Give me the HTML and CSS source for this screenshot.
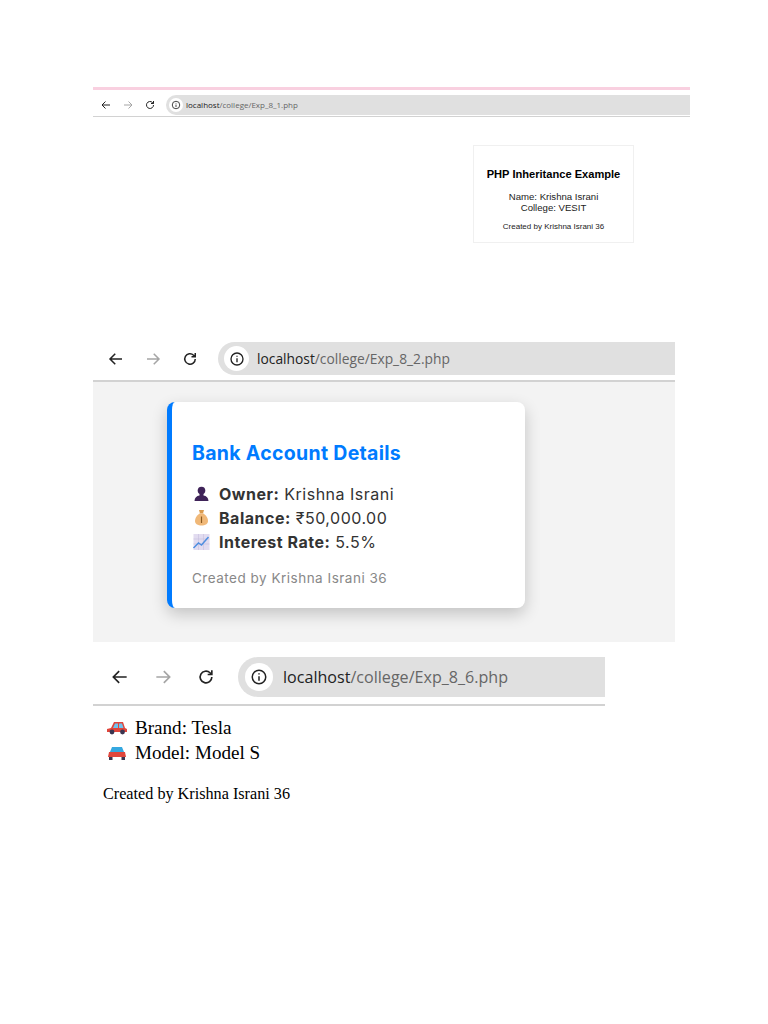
FILE: index.html
```html
<!DOCTYPE html>
<html lang="en">

<head>
    <meta charset="UTF-8" />
    <title>Exp 8</title>
    <link rel="stylesheet" href="styles.css">
</head>

<body>
    <!-- Exp 8.1 -->
    <section class="shot shot-one">
        <div class="pink-line"></div>
        <div class="toolbar">
            <svg class="nav-icon" viewBox="0 0 24 24"><path d="M20 12H5M11 5l-7 7 7 7" /></svg>
            <svg class="nav-icon off" viewBox="0 0 24 24"><path d="M4 12h15M13 5l7 7-7 7" /></svg>
            <svg class="nav-icon" viewBox="0 0 24 24"><path d="M19 12a7 7 0 1 1-2.2-5.1L19 9M19 4v5h-5" /></svg>
            <div class="address">
                <span class="info"><svg viewBox="0 0 24 24"><circle cx="12" cy="12" r="9" /><path d="M12 11v6M12 7v1.6" /></svg></span>
                <span class="url"><b>localhost</b>/college/Exp_8_1.php</span>
            </div>
        </div>
        <div class="php-page">
            <div class="php-card">
                <h2>PHP Inheritance Example</h2>
                <p>Name: Krishna Israni<br>College: VESIT</p>
                <small>Created by Krishna Israni 36</small>
            </div>
        </div>
    </section>

    <!-- Exp 8.2 -->
    <section class="shot shot-two">
        <div class="toolbar">
            <svg class="nav-icon" viewBox="0 0 24 24"><path d="M20 12H5M11 5l-7 7 7 7" /></svg>
            <svg class="nav-icon off" viewBox="0 0 24 24"><path d="M4 12h15M13 5l7 7-7 7" /></svg>
            <svg class="nav-icon" viewBox="0 0 24 24"><path d="M19 12a7 7 0 1 1-2.2-5.1L19 9M19 4v5h-5" /></svg>
            <div class="address">
                <span class="info"><svg viewBox="0 0 24 24"><circle cx="12" cy="12" r="9" /><path d="M12 11v6M12 7v1.6" /></svg></span>
                <span class="url"><b>localhost</b>/college/Exp_8_2.php</span>
            </div>
        </div>
        <div class="bank-page">
            <div class="bank-card">
                <h2>Bank Account Details</h2>
                <div class="bank-row">
                    <svg class="emoji" viewBox="0 0 16 16"><circle cx="8" cy="4.500" r="3.800" fill="#3f2358" /><path d="M6 7h4v2.500c3 .5 4.800 2 5 5.500H1c.2-3.500 2-5 5-5.500z" fill="#3f2358" /></svg>
                    <span><b>Owner:</b> Krishna Israni</span>
                </div>
                <div class="bank-row">
                    <svg class="emoji" viewBox="0 0 16 16"><path d="M5.500 0h5L9.500 3.500h-3z" fill="#d99a4e" /><path d="M6 3.500h4c3 2 4.500 4.800 4.500 7.500 0 3-3 4.500-6.500 4.500S1.500 14 1.500 11c0-2.700 1.500-5.500 4.500-7.500z" fill="#f0b878" /><path d="M8 6.500v6.500" stroke="#8a5a20" stroke-width="1.200" /></svg>
                    <span><b>Balance:</b> ₹50,000.00</span>
                </div>
                <div class="bank-row">
                    <svg class="emoji" viewBox="0 0 16 16"><rect width="16" height="16" fill="#e2dcf0" /><path d="M5 0v16M10 0v16M0 5h16M0 10h16" stroke="#c8c0de" stroke-width=".6" /><path d="M0 14l5-5 3 2 7-8" fill="none" stroke="#4f8fe0" stroke-width="1.500" /></svg>
                    <span><b>Interest Rate:</b> 5.5%</span>
                </div>
                <p class="bank-foot">Created by Krishna Israni 36</p>
            </div>
        </div>
    </section>

    <!-- Exp 8.6 -->
    <section class="shot shot-three">
        <div class="toolbar">
            <svg class="nav-icon" viewBox="0 0 24 24"><path d="M20 12H5M11 5l-7 7 7 7" /></svg>
            <svg class="nav-icon off" viewBox="0 0 24 24"><path d="M4 12h15M13 5l7 7-7 7" /></svg>
            <svg class="nav-icon" viewBox="0 0 24 24"><path d="M19 12a7 7 0 1 1-2.2-5.1L19 9M19 4v5h-5" /></svg>
            <div class="address">
                <span class="info"><svg viewBox="0 0 24 24"><circle cx="12" cy="12" r="9" /><path d="M12 11v6M12 7v1.6" /></svg></span>
                <span class="url"><b>localhost</b>/college/Exp_8_6.php</span>
            </div>
        </div>
        <div class="car-page">
            <div class="car-row">
                <svg class="car" viewBox="0 0 20 14"><path d="M0 11V8l4-1 3-6h9l2 6 2 1v3z" fill="#e0463c" /><path d="M8 2.500h3V7H6zM12 2.500h3L16.500 7H12z" fill="#6fc3ee" /><circle cx="5" cy="11" r="2.400" fill="#3a3550" /><circle cx="15.500" cy="11" r="2.400" fill="#3a3550" /></svg>
                <span>Brand: Tesla</span>
            </div>
            <div class="car-row">
                <svg class="car" viewBox="0 0 20 14"><path d="M5 1h10l2 5H3z" fill="#35a8e0" /><path d="M2 6h16l1 5H1z" fill="#e0463c" /><rect x="2" y="11" width="3.500" height="3" fill="#3a3550" /><rect x="14.500" y="11" width="3.500" height="3" fill="#3a3550" /></svg>
                <span>Model: Model S</span>
            </div>
            <p class="car-foot">Created by Krishna Israni 36</p>
        </div>
    </section>
</body>

</html>
```

FILE: styles.css
```css
body {
    margin: 0;
    background-color: #fff;
    font-family: "Liberation Sans", Arial, sans-serif;
}

.shot {
    margin-left: 93px;
}

.shot-one {
    width: 597px;
    padding-top: 87px;
}

.shot-two {
    width: 582px;
    margin-top: 94px;
}

.shot-three {
    width: 512px;
    margin-top: 8px;
}

.pink-line {
    height: 3px;
    background-color: #f9d0e0;
}

/* browser bars */

.toolbar {
    display: flex;
    align-items: center;
    background-color: #fff;
    border-bottom: 2px solid #d2d2d2;
}

.nav-icon {
    flex: none;
    fill: none;
    stroke: #222;
    stroke-width: 2;
}

.nav-icon.off {
    stroke: #a5a5a5;
}

.address {
    flex: 1;
    display: flex;
    align-items: center;
    background-color: #e0e0e0;
}

.info {
    display: flex;
    align-items: center;
    justify-content: center;
    background-color: #fff;
    border-radius: 50%;
}

.info svg {
    fill: none;
    stroke: #222;
    stroke-width: 2;
}

.url {
    color: #666;
    font-family: "Open Sans", sans-serif;
}

.url b {
    font-weight: 400;
    color: #222;
}

.shot-one .toolbar {
    height: 23px;
    padding-left: 7px;
    margin-top: 3px;
    border-bottom-width: 1px;
    gap: 10px;
}

.shot-one .nav-icon {
    width: 12px;
    height: 12px;
}

.shot-one .address {
    height: 20px;
    padding-left: 3px;
    border-radius: 10px 0 0 10px;
}

.shot-one .info {
    width: 14px;
    height: 14px;
}

.shot-one .info svg {
    width: 10px;
    height: 10px;
}

.shot-one .url {
    font-size: 8px;
    margin-left: 3px;
}

.shot-two .toolbar {
    height: 43px;
    padding-left: 14px;
    gap: 19px;
}

.shot-two .nav-icon {
    width: 18px;
    height: 18px;
}

.shot-two .address {
    height: 33px;
    padding-left: 6px;
    border-radius: 17px 0 0 17px;
}

.shot-two .info {
    width: 25px;
    height: 25px;
}

.shot-two .info svg {
    width: 16px;
    height: 16px;
}

.shot-two .url {
    font-size: 13.800px;
    margin-left: 8px;
}

.shot-three .toolbar {
    height: 54px;
    padding-left: 17px;
    gap: 23px;
}

.shot-three .nav-icon {
    width: 20px;
    height: 20px;
}

.shot-three .address {
    height: 40px;
    padding-left: 7px;
    margin-left: -1px;
    border-radius: 20px 0 0 20px;
}

.shot-three .info {
    width: 28px;
    height: 28px;
}

.shot-three .info svg {
    width: 18px;
    height: 18px;
}

.shot-three .url {
    font-size: 16.100px;
    margin-left: 10px;
}

/* first page */

.php-page {
    display: flex;
    justify-content: flex-end;
    padding: 28px 56px 0 0;
}

.php-card {
    width: 159px;
    height: 96px;
    border: 1px solid #f0f0f0;
    text-align: center;
    color: #222;
}

.php-card h2 {
    margin: 22px 0 11px;
    font-size: 11.100px;
    color: #000;
}

.php-card p {
    margin: 0 0 9px;
    font-size: 9.600px;
    line-height: 11px;
}

.php-card small {
    display: block;
    font-size: 8px;
    line-height: 10px;
}

/* bank page */

.bank-page {
    height: 260px;
    padding: 20px 0 0 74px;
    background-color: #f3f3f3;
    box-sizing: border-box;
}

.bank-card {
    width: 358px;
    height: 206px;
    padding: 40px 0 0 20px;
    box-sizing: border-box;
    background-color: #fff;
    border-left: 5px solid #007bff;
    border-radius: 8px;
    box-shadow: 0 6px 16px rgba(0, 0, 0, 0.2);
    font-family: Inter, sans-serif;
    color: #333;
}

.bank-card h2 {
    margin: 0 0 18px;
    font-size: 19.500px;
    line-height: 22px;
    font-weight: 700;
    letter-spacing: 0.3px;
    color: #007bff;
}

.bank-row {
    display: flex;
    align-items: center;
    gap: 8px;
    height: 24px;
    font-size: 16px;
    letter-spacing: 0.5px;
}

.bank-row b {
    font-weight: 700;
}

.emoji {
    width: 19px;
    height: 16px;
    flex: none;
}

.bank-foot {
    margin: 16px 0 0;
    font-size: 13.500px;
    letter-spacing: 0.5px;
    color: #888;
}

/* car page */

.car-page {
    padding: 9px 0 0 10px;
    font-family: "Liberation Serif", "Times New Roman", serif;
    font-size: 19.100px;
    color: #000;
}

.car-row {
    display: flex;
    align-items: center;
    gap: 8px;
    height: 25px;
    padding-left: 4px;
}

.car {
    width: 20px;
    height: 14px;
    flex: none;
}

.car-foot {
    margin: 20px 0 0;
    font-size: 16.200px;
}
```
